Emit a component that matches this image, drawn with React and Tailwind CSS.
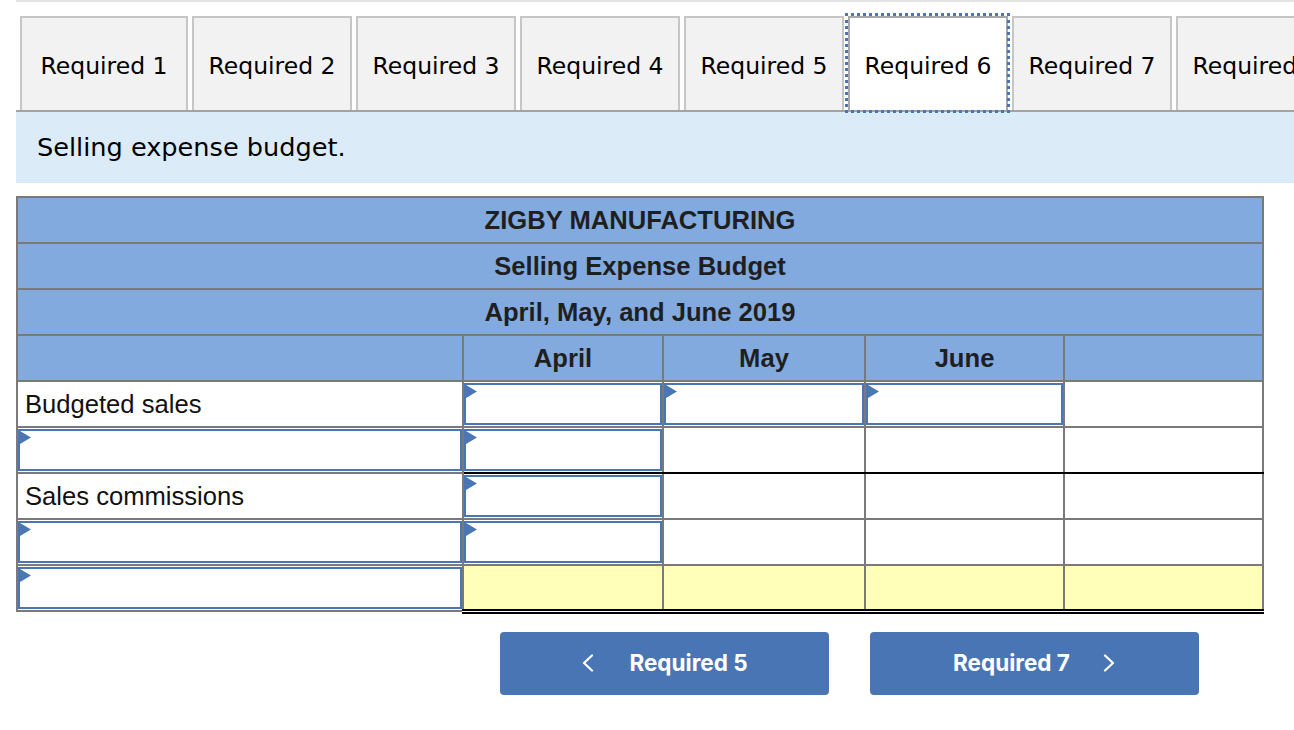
import React from 'react';

const tabs = [1, 2, 3, 4, 5, 6, 7, 8];
const ACTIVE = 6;

function Flag() {
  return (
    <svg className="absolute left-0 top-0" width="11" height="13" viewBox="0 0 11 13">
      <polygon points="0,0 11,6.5 0,13" fill="#4a76b5" />
    </svg>
  );
}

function InputCell({ extra = '' }) {
  return (
    <td className={'p-0 border-2 border-[#7a7a7a] ' + extra}>
      <div className="relative h-[42px] border-2 border-[#4a76b5] bg-white">
        <Flag />
      </div>
    </td>
  );
}

function Chevron({ dir }) {
  return (
    <svg width="14" height="18" viewBox="0 0 14 18" fill="none" stroke="white" strokeWidth="2.2" strokeLinecap="round" strokeLinejoin="round">
      {dir === 'left' ? <polyline points="11,1.5 3,9 11,16.5" /> : <polyline points="3,1.5 11,9 3,16.5" />}
    </svg>
  );
}

export default function App() {
  const cell = 'border-2 border-[#7a7a7a]';
  const head = 'border-2 border-[#7a7a7a] bg-[#82aadf] text-center font-bold text-[#1f1f1f] h-[46px] p-0';
  const total = 'border-2 border-[#7a7a7a] border-b-[5px] border-b-black border-double bg-[#ffffb9]';

  return (
    <div className="w-full min-h-screen bg-white overflow-hidden" style={{ fontFamily: '"DejaVu Sans", Verdana, sans-serif' }}>
      {/* top rule */}
      <div className="ml-[16px] h-[2px] bg-[#e2e2e2]" />

      {/* tab strip */}
      <div className="ml-[16px] mt-[14px] border-b-2 border-[#a3a3a3] w-[1400px]">
        <div className="flex gap-[4px] pl-[4px]">
          {tabs.map((n) => (
            <div
              key={n}
              className={
                'relative shrink-0 h-[94px] flex items-center justify-center pt-[5px] border-2 border-b-0 text-[23.5px] text-black ' +
                (n === 1 ? 'w-[168px] ' : 'w-[160px] ') +
                (n === ACTIVE ? 'bg-white border-[#a8a8a8]' : 'bg-[#f2f2f2] border-[#c6c6c6]')
              }
            >
              Required {n}
              {n === ACTIVE && (
                <span className="pointer-events-none absolute -left-[5px] -right-[4px] -top-[5px] -bottom-[3px] border-[3px] border-dotted border-[#4a76b5]" />
              )}
            </div>
          ))}
        </div>
      </div>

      {/* instruction band */}
      <div className="ml-[16px] h-[71px] bg-[#dcebf8] flex items-center pl-[21px] text-[25.6px] text-black">
        Selling expense budget.
      </div>

      {/* budget table */}
      <div className="ml-[16px] mt-[13px]" style={{ fontFamily: '"Liberation Sans", Arial, sans-serif' }}>
        <table className="table-fixed border-collapse w-[1246px] text-[25.6px]">
          <colgroup>
            <col className="w-[446px]" />
            <col className="w-[200px]" />
            <col className="w-[202px]" />
            <col className="w-[199px]" />
            <col className="w-[199px]" />
          </colgroup>
          <tbody>
            <tr><td colSpan={5} className={head}>ZIGBY MANUFACTURING</td></tr>
            <tr><td colSpan={5} className={head}>Selling Expense Budget</td></tr>
            <tr><td colSpan={5} className={head}>April, May, and June 2019</td></tr>
            <tr>
              <td className={head}></td>
              <td className={head}>April</td>
              <td className={head}>May</td>
              <td className={head}>June</td>
              <td className={head}></td>
            </tr>
            <tr className="h-[46px]">
              <td className={cell + ' pl-[7px] text-[#111]'}>Budgeted sales</td>
              <InputCell />
              <InputCell />
              <InputCell />
              <td className={cell}></td>
            </tr>
            <tr className="h-[46px]">
              <InputCell />
              <InputCell extra="border-b-black" />
              <td className={cell + ' border-b-black'}></td>
              <td className={cell + ' border-b-black'}></td>
              <td className={cell + ' border-b-black'}></td>
            </tr>
            <tr className="h-[46px]">
              <td className={cell + ' pl-[7px] text-[#111]'}>Sales commissions</td>
              <InputCell />
              <td className={cell}></td>
              <td className={cell}></td>
              <td className={cell}></td>
            </tr>
            <tr className="h-[46px]">
              <InputCell />
              <InputCell extra="border-b-black" />
              <td className={cell + ' border-b-black'}></td>
              <td className={cell + ' border-b-black'}></td>
              <td className={cell + ' border-b-black'}></td>
            </tr>
            <tr className="h-[46px]">
              <InputCell />
              <td className={total}></td>
              <td className={total}></td>
              <td className={total}></td>
              <td className={total}></td>
            </tr>
          </tbody>
        </table>
      </div>

      {/* navigation buttons */}
      <div className="flex gap-[41px] pl-[500px] mt-[18px]" style={{ fontFamily: 'Inter, "Liberation Sans", sans-serif' }}>
        <button className="w-[329px] h-[63px] rounded-[4px] bg-[#4a75b4] text-white font-bold text-[22.5px] flex items-center justify-center gap-[34px]">
          <Chevron dir="left" />
          <span>Required 5</span>
        </button>
        <button className="w-[329px] h-[63px] rounded-[4px] bg-[#4a75b4] text-white font-bold text-[22.5px] flex items-center justify-center gap-[32px]">
          <span>Required 7</span>
          <Chevron dir="right" />
        </button>
      </div>
    </div>
  );
}
